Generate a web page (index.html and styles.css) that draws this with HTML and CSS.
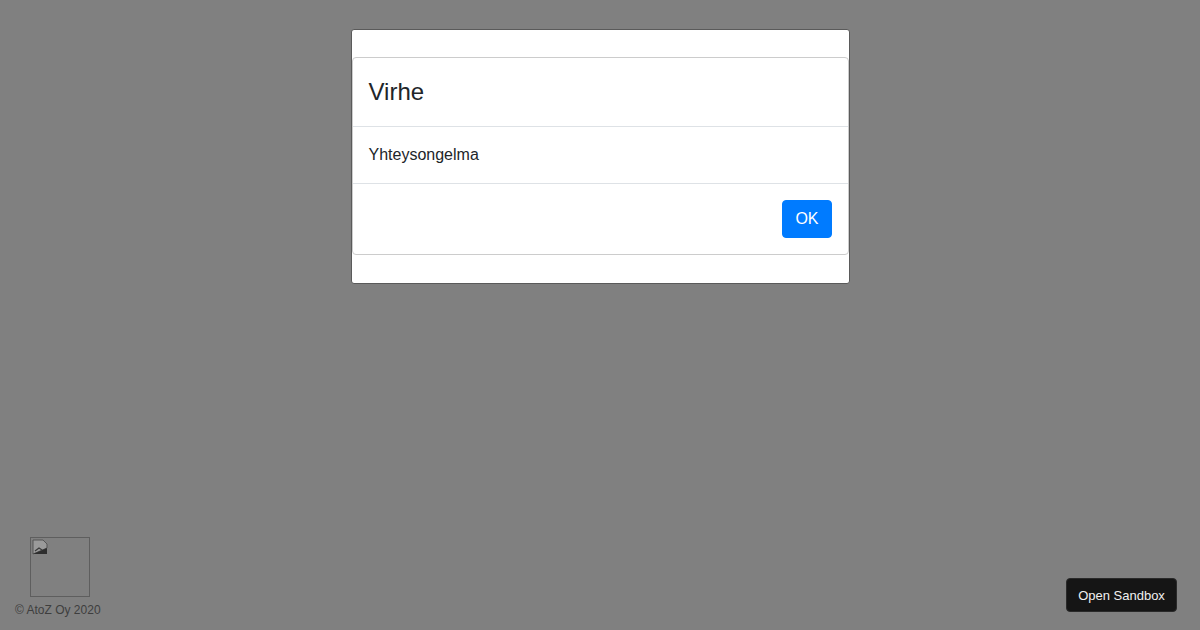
FILE: index.html
```html
<!DOCTYPE html>
<html lang="fi">
<head>
    <meta charset="UTF-8">
    <meta name="viewport" content="width=device-width, initial-scale=1.0">
    <title>AtoZ</title>
    <link rel="stylesheet" href="styles.css">
</head>
<body>
    <div class="page">
        <div class="modal-wrap">
            <div class="modal-content">
                <div class="modal-header">
                    <h4 class="modal-title">Virhe</h4>
                </div>
                <div class="modal-body">Yhteysongelma</div>
                <div class="modal-footer">
                    <button class="btn-ok">OK</button>
                </div>
            </div>
        </div>

        <footer class="footer">
            <div class="logo">
                <svg width="16" height="16" viewBox="0 0 16 16">
                    <path d="M1 1h10l4 4v4L1 15z" fill="#9a9a9a" stroke="#555" stroke-width="1"/>
                    <path d="M1 15L15 9v6z" fill="#2e2e2e"/>
                    <path d="M3 12l4-3 3 2" fill="none" stroke="#3a3a3a" stroke-width="1.2"/>
                </svg>
            </div>
            <div class="copyright">&copy; AtoZ Oy 2020</div>
        </footer>
    </div>

    <button class="sandbox-btn">Open Sandbox</button>
</body>
</html>
```

FILE: styles.css
```css
body {
    margin: 0;
    padding: 0;
    background-color: #808080;
    font-family: "Liberation Sans", Arial, sans-serif;
    color: #212529;
}

.page {
    height: 100vh;
    display: flex;
    flex-direction: column;
    align-items: center;
    box-sizing: border-box;
}

.modal-wrap {
    width: 499px;
    margin-top: 29px;
    padding: 27px 0 28px;
    background: #fff;
    border: 1px solid #5a5a5a;
    border-radius: 3px;
    box-sizing: border-box;
}

.modal-content {
    background: #fff;
    border: 1px solid #cccccc;
    border-radius: 4px;
}

.modal-header {
    padding: 16px;
    border-bottom: 1px solid #dee2e6;
}

.modal-title {
    margin: 0;
    font-size: 24px;
    font-weight: 400;
    line-height: 36px;
}

.modal-body {
    padding: 16px;
    font-size: 16px;
    line-height: 24px;
}

.modal-footer {
    display: flex;
    justify-content: flex-end;
    padding: 16px;
    border-top: 1px solid #dee2e6;
}

.btn-ok {
    font-family: inherit;
    font-size: 16px;
    line-height: 24px;
    padding: 6px 12px;
    color: #fff;
    background-color: #007bff;
    border: 1px solid #007bff;
    border-radius: 4px;
    cursor: pointer;
}

.footer {
    align-self: stretch;
    margin-top: auto;
    padding: 0 0 12px 15px;
}

.logo {
    width: 60px;
    height: 60px;
    margin-left: 15px;
    border: 1px solid #5e5e5e;
    box-sizing: border-box;
    padding: 1px;
}

.logo svg {
    display: block;
}

.copyright {
    margin-top: 6px;
    font-size: 12px;
    line-height: 15px;
    color: #3e3e3e;
}

.sandbox-btn {
    position: fixed;
    right: 23px;
    bottom: 18px;
    width: 111px;
    height: 34px;
    padding: 0;
    font-family: inherit;
    font-size: 13px;
    color: #f0f0f0;
    background-color: #151515;
    border: 1px solid #2a2a2a;
    border-radius: 4px;
    cursor: pointer;
}
```
